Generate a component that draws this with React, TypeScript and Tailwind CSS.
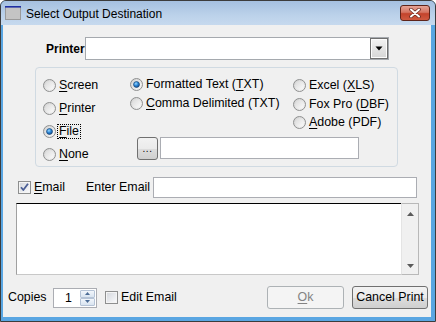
import React from "react";

function Radio({ checked = false }: { checked?: boolean }) {
  return (
    <svg width="13" height="13" viewBox="0 0 13 13" className="shrink-0">
      <defs>
        <linearGradient id="rgOuter" x1="0" y1="0" x2="1" y2="1">
          <stop offset="0" stopColor="#cfcfcf" />
          <stop offset="1" stopColor="#f7f7f7" />
        </linearGradient>
        <linearGradient id="rgInner" x1="0" y1="0" x2="1" y2="1">
          <stop offset="0" stopColor="#dadada" />
          <stop offset="1" stopColor="#fbfbfb" />
        </linearGradient>
        <radialGradient id="rgDot" cx="0.4" cy="0.35" r="0.75">
          <stop offset="0" stopColor="#9ad8ff" />
          <stop offset="0.45" stopColor="#2c86d6" />
          <stop offset="1" stopColor="#0a3b78" />
        </radialGradient>
      </defs>
      <circle cx="6.5" cy="6.5" r="6" fill="url(#rgOuter)" stroke="#8f9090" strokeWidth="1" />
      <circle cx="6.5" cy="6.5" r="4.3" fill="url(#rgInner)" />
      {checked && (
        <circle cx="6.5" cy="6.5" r="3" fill="url(#rgDot)" stroke="#163f6e" strokeWidth="0.6" />
      )}
    </svg>
  );
}

function Check({ checked = false }: { checked?: boolean }) {
  return (
    <svg width="13" height="13" viewBox="0 0 13 13" className="shrink-0">
      <defs>
        <linearGradient id="cbIn" x1="0" y1="0" x2="1" y2="1">
          <stop offset="0" stopColor="#d6d9de" />
          <stop offset="1" stopColor="#f7f8fa" />
        </linearGradient>
      </defs>
      <rect x="0.5" y="0.5" width="12" height="12" fill="#f4f4f4" stroke="#8e8f8f" />
      <rect x="2" y="2" width="9" height="9" fill="url(#cbIn)" />
      {checked && (
        <path d="M3 6.2 L5.3 9 L10 2.8" fill="none" stroke="#4a5e95" strokeWidth="1.8" strokeLinejoin="round" />
      )}
    </svg>
  );
}

function U({ children }: { children: React.ReactNode }) {
  return <span className="underline underline-offset-[2px] decoration-[1px]">{children}</span>;
}

function RadioItem({
  checked,
  children,
  focus,
}: {
  checked?: boolean;
  children: React.ReactNode;
  focus?: boolean;
}) {
  return (
    <div className="flex items-center gap-[1px]">
      <Radio checked={checked} />
      <span
        className={`px-[1px] leading-[13px] border whitespace-nowrap ${
          focus ? "border-dotted border-black" : "border-transparent"
        }`}
      >
        {children}
      </span>
    </div>
  );
}

export default function App() {
  return (
    <div className="w-[436px] h-[322px] flex flex-col border border-[#3c3c3c] rounded-t-[6px] overflow-hidden bg-[#5aa6e2] text-[12.4px] text-black font-['Liberation_Sans',Arial,sans-serif]">
      {/* Title bar */}
      <div className="h-[24px] flex items-center bg-[linear-gradient(to_bottom,#a5c0e0,#bcd2ea_60%,#c6d9ee)] shrink-0">
        <svg width="16" height="14" viewBox="0 0 16 14" className="ml-[4px] shrink-0">
          <rect x="0.5" y="0.5" width="15" height="13" fill="#c4c4c4" stroke="#9a9a9a" />
          <rect x="0" y="0" width="16" height="1.6" fill="#1f2fa3" />
        </svg>
        <span className="ml-[5px] text-[12px] text-black font-['Liberation_Sans',Arial,sans-serif] leading-none mt-[1px]">
          Select Output Destination
        </span>
        <div className="ml-auto mr-[5px] w-[30px] h-[16px] rounded-[3px] border border-[#5e241a] bg-[linear-gradient(to_bottom,#e6a396,#d57461_45%,#c3432c_55%,#cf5a41)] flex items-center justify-center">
          <svg width="12" height="10" viewBox="0 0 12 10">
            <path d="M2 1.5 L10 8.5 M10 1.5 L2 8.5" stroke="#6a2a22" strokeWidth="3.6" strokeLinecap="round" />
            <path d="M2 1.5 L10 8.5 M10 1.5 L2 8.5" stroke="#ffffff" strokeWidth="2" strokeLinecap="round" />
          </svg>
        </div>
      </div>

      {/* Client */}
      <div className="flex-1 ml-[2px] mr-[4px] mb-[4px] bg-[#f0f0f0] flex flex-col">
        {/* Printer row */}
        <div className="mt-[12px] h-[23px] flex items-center">
          <span className="ml-[43px] w-[39px] font-bold whitespace-nowrap text-[12px]">Printer</span>
          <div className="w-[304px] h-[23px] border border-[#a5a9ae] bg-white flex items-center justify-end">
            <div className="w-[18px] h-[21px] border border-[#707070] bg-[linear-gradient(to_bottom,#f3f3f3,#e4e4e4_50%,#d6d6d6)] flex items-center justify-center shadow-[inset_0_0_0_1px_#fcfcfc]">
              <svg width="8" height="5" viewBox="0 0 8 5">
                <path d="M0.5 0.5 L7.5 0.5 L4 4.5 Z" fill="#000" />
              </svg>
            </div>
          </div>
        </div>

        {/* Group box */}
        <div className="mt-[7px] ml-[32px] w-[363px] h-[100px] border border-[#d0dae2] rounded-[4px] flex">
          <div className="ml-[7px] w-[87px] pt-[5px] flex flex-col">
            <div className="h-[24px] flex items-center">
              <RadioItem>
                <U>S</U>creen
              </RadioItem>
            </div>
            <div className="h-[23px] flex items-center">
              <RadioItem>
                <U>P</U>rinter
              </RadioItem>
            </div>
            <div className="h-[23px] flex items-center">
              <RadioItem checked focus>
                <U>F</U>ile
              </RadioItem>
            </div>
            <div className="h-[23px] flex items-center">
              <RadioItem>
                <U>N</U>one
              </RadioItem>
            </div>
          </div>
          <div className="pt-[7px] flex flex-col">
            <div className="flex">
              <div className="w-[163px] flex flex-col">
                <div className="h-[19px] flex items-center">
                  <RadioItem checked>
                    Formatted Text (<U>T</U>XT)
                  </RadioItem>
                </div>
                <div className="h-[19px] flex items-center">
                  <RadioItem>
                    <U>C</U>omma Delimited (TXT)
                  </RadioItem>
                </div>
              </div>
              <div className="flex flex-col pt-[1px]">
                <div className="h-[19px] flex items-center">
                  <RadioItem>
                    Excel (<U>X</U>LS)
                  </RadioItem>
                </div>
                <div className="h-[18px] flex items-center">
                  <RadioItem>
                    Fox Pro (<U>D</U>BF)
                  </RadioItem>
                </div>
                <div className="h-[19px] flex items-center">
                  <RadioItem>
                    <U>A</U>dobe (PDF)
                  </RadioItem>
                </div>
              </div>
            </div>
            <div className="mt-[5px] ml-[7px] flex items-start">
              <div className="w-[21px] h-[23px] rounded-[3px] border border-[#707070] bg-[linear-gradient(to_bottom,#f2f2f2,#ebebeb_50%,#dddddd_50%,#cfcfcf)] flex items-end justify-center pb-[5px]">
                <span className="text-[10px] leading-none tracking-[0.5px]">...</span>
              </div>
              <div className="ml-[2px] w-[199px] h-[22px] border border-[#abadb3] bg-white" />
            </div>
          </div>
        </div>

        {/* Email row */}
        <div className="mt-[10px] h-[21px] flex items-center">
          <div className="ml-[15px] flex items-center gap-[3px] w-[68px]">
            <Check checked />
            <span>
              <U>E</U>mail
            </span>
          </div>
          <span className="w-[67px] whitespace-nowrap">Enter Email</span>
          <div className="w-[264px] h-[21px] border border-[#abadb3] bg-white" />
        </div>

        {/* Memo */}
        <div className="mt-[5px] ml-[13px] w-[403px] h-[72px] flex">
          <div className="flex-1 bg-white border-t border-t-black border-l border-l-[#a0a0a0] border-b border-b-[#c8c8c8]" />
          <div className="w-[18px] flex flex-col items-center justify-between bg-[#f0f0f0] border-t border-r border-b border-[#b8b8b8] border-l border-l-[#e4e4e4] pt-[8px] pb-[6px]">
            <svg width="7" height="4" viewBox="0 0 7 4">
              <path d="M0 4 L3.5 0 L7 4 Z" fill="#5a5a5a" />
            </svg>
            <svg width="7" height="4" viewBox="0 0 7 4">
              <path d="M0 0 L7 0 L3.5 4 Z" fill="#5a5a5a" />
            </svg>
          </div>
        </div>

        {/* Bottom row */}
        <div className="mt-[11px] h-[23px] flex items-center">
          <span className="ml-[5px] w-[45px]">Copies</span>
          <div className="w-[44px] h-[20px] border border-[#abadb3] bg-white flex items-stretch">
            <span className="flex-1 text-right pr-[8px] leading-[18px]">1</span>
            <div className="w-[15px] mr-[1px] my-[1px] flex flex-col">
              <div className="flex-1 border border-[#b5c3d6] rounded-[1px] bg-[linear-gradient(to_bottom,#f2f6fb,#d9e4f0)] flex items-center justify-center">
                <svg width="5" height="3" viewBox="0 0 5 3">
                  <path d="M0 3 L2.5 0 L5 3 Z" fill="#4c6c96" />
                </svg>
              </div>
              <div className="flex-1 border border-[#b5c3d6] rounded-[1px] bg-[linear-gradient(to_bottom,#f2f6fb,#d9e4f0)] flex items-center justify-center">
                <svg width="5" height="3" viewBox="0 0 5 3">
                  <path d="M0 0 L5 0 L2.5 3 Z" fill="#4c6c96" />
                </svg>
              </div>
            </div>
          </div>
          <div className="ml-[8px] flex items-center gap-[3px]">
            <Check />
            <span>Edit Email</span>
          </div>
          <div className="ml-auto w-[77px] h-[23px] rounded-[3px] border border-[#adb2b5] bg-[#f4f4f4] flex items-center justify-center text-[#838383]">
            <span>
              <U>O</U>k
            </span>
          </div>
          <div className="ml-[8px] mr-[3px] w-[76px] h-[23px] rounded-[3px] border border-[#707070] bg-[linear-gradient(to_bottom,#f2f2f2,#ebebeb_50%,#dddddd_50%,#cfcfcf)] flex items-center justify-center whitespace-nowrap">
            Cancel Print
          </div>
        </div>
      </div>
    </div>
  );
}
